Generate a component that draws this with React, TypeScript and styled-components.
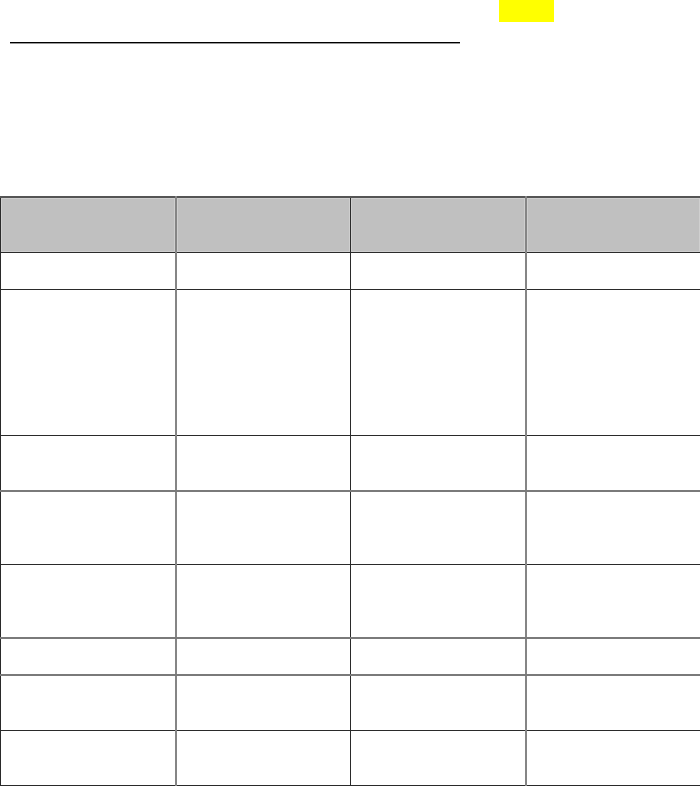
import React from "react";
import styled, { createGlobalStyle } from "styled-components";

const Global = createGlobalStyle`
  html, body { margin: 0; padding: 0; background: #fff; }
  body { font-family: "Liberation Sans", Arial, sans-serif; }
`;

const Page = styled.div`
  width: 700px;
  height: 786px;
  overflow: hidden;
  background: #fff;
`;

const TopBar = styled.div`
  height: 22px;
  display: flex;
`;

const Highlight = styled.span`
  margin-left: 499px;
  width: 55px;
  height: 22px;
  background: #ffff00;
`;

const Rule = styled.div`
  margin: 20px 0 0 10px;
  width: 450px;
  height: 1px;
  background: #000;
  border-bottom: 1px solid #999;
`;

const Table = styled.table`
  margin-top: 152px;
  width: 700px;
  table-layout: fixed;
  border-collapse: collapse;
`;

const Col = styled.col<{ $w: number }>`
  width: ${(p) => p.$w}px;
`;

const Row = styled.tr<{ $h: number; $line: "dark" | "gray" }>`
  height: ${(p) => p.$h}px;
  & > td, & > th {
    border-bottom: ${(p) => (p.$line === "dark" ? "1px solid #2a2a2a" : "2px solid #7a7a7a")};
  }
`;

const Cell = styled.td<{ $soft?: boolean }>`
  padding: 0;
  border-top: 1px solid #2a2a2a;
  border-left: 1px solid #2a2a2a;
  border-right: ${(p) => (p.$soft ? "2px solid #858585" : "1px solid #2a2a2a")};
`;

const HeadCell = styled.th<{ $soft?: boolean }>`
  padding: 0;
  background: #c0c0c0;
  border-top: 2px solid #555;
  border-left: 1px solid #2a2a2a;
  border-right: ${(p) => (p.$soft ? "2px solid #858585" : "1px solid #2a2a2a")};
  box-shadow: inset 0 0 0 1px #cfcfcf;
`;

const rows: { h: number; line: "dark" | "gray" }[] = [
  { h: 37, line: "dark" },
  { h: 146, line: "dark" },
  { h: 56, line: "gray" },
  { h: 73, line: "dark" },
  { h: 74, line: "gray" },
  { h: 37, line: "gray" },
  { h: 55, line: "dark" },
  { h: 55, line: "dark" },
];

export default function App() {
  return (
    <Page>
      <Global />
      <TopBar>
        <Highlight />
      </TopBar>
      <Rule />
      <Table>
        <colgroup>
          <Col $w={175} />
          <Col $w={175} />
          <Col $w={175} />
          <Col $w={175} />
        </colgroup>
        <thead>
          <Row $h={55} $line="dark">
            <HeadCell $soft />
            <HeadCell />
            <HeadCell $soft />
            <HeadCell />
          </Row>
        </thead>
        <tbody>
          {rows.map((r, i) => (
            <Row key={i} $h={r.h} $line={r.line}>
              <Cell $soft />
              <Cell />
              <Cell $soft />
              <Cell />
            </Row>
          ))}
        </tbody>
      </Table>
    </Page>
  );
}
